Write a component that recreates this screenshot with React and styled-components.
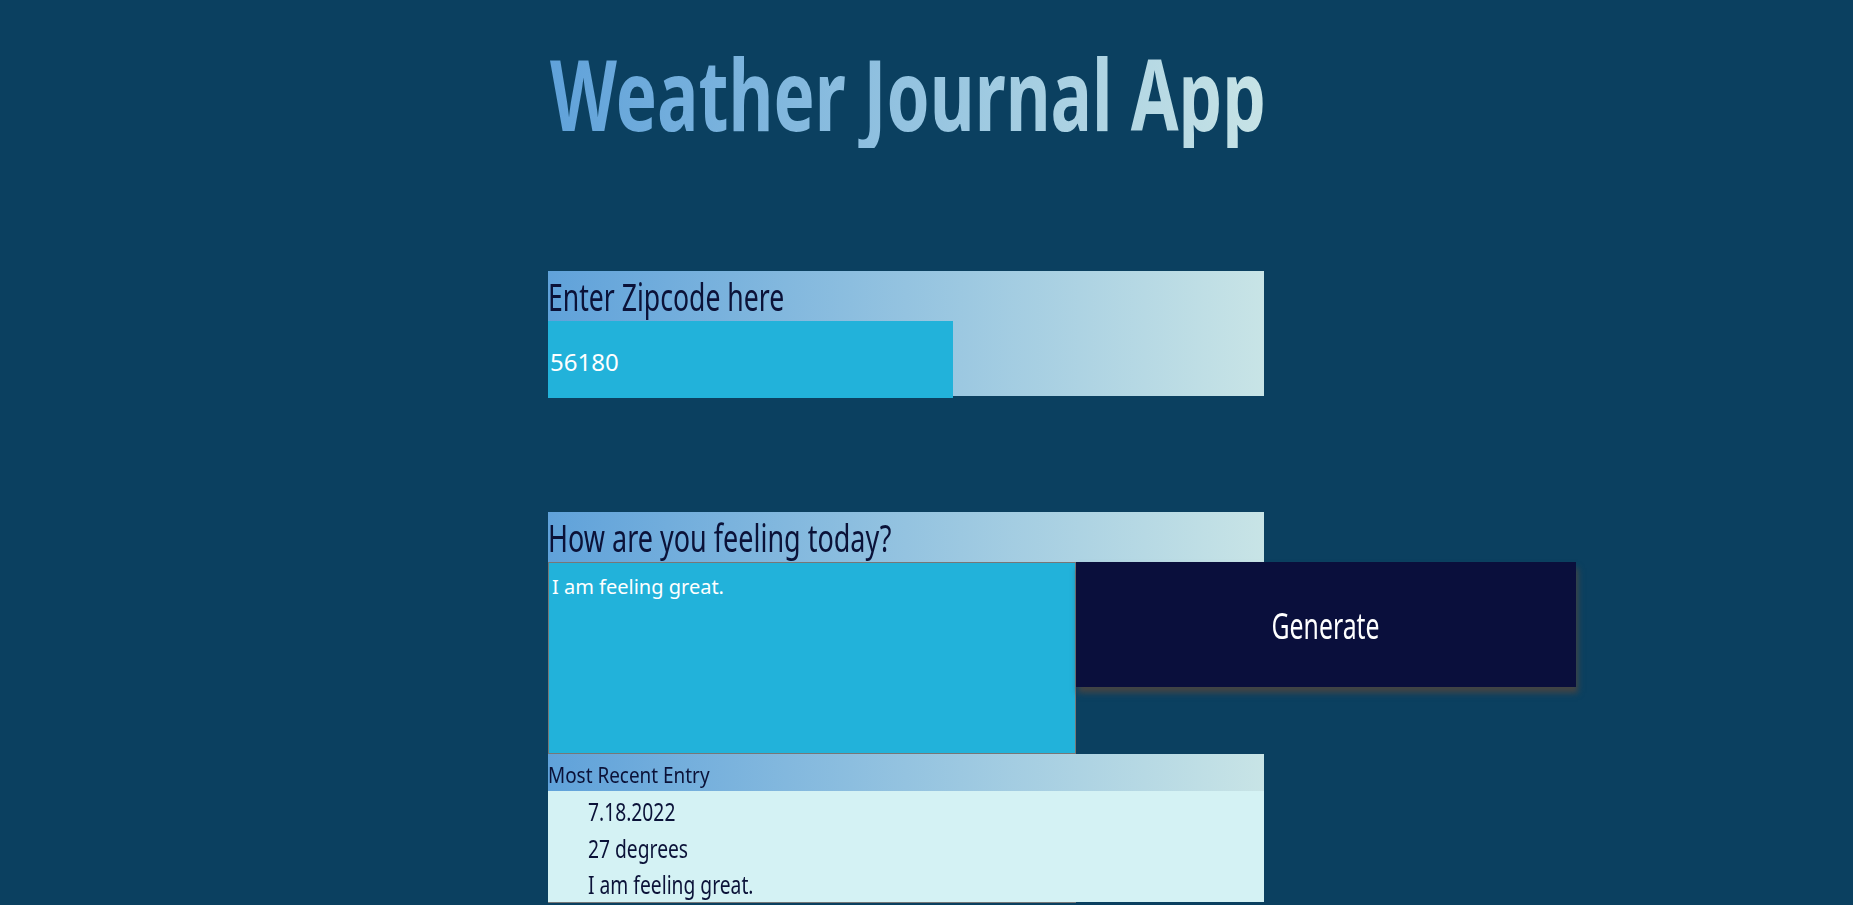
import React from "react";
import styled, { createGlobalStyle } from "styled-components";

const GlobalStyle = createGlobalStyle`
  body {
    margin: 0;
    background: #0b4060;
    font-family: "Noto Sans", "DejaVu Sans", sans-serif;
    color: #0b1238;
  }
`;

const fade = "linear-gradient(to right, #60a2da, #c8e4e6)";

function App() {
  return (
    <>
      <GlobalStyle />
      <Main>
        <Title>
          <TitleText>Weather Journal App</TitleText>
        </Title>

        <ZipHolder>
          <Label htmlFor="zip">
            <Narrow $k={0.7}>Enter Zipcode here</Narrow>
          </Label>
          <ZipInput id="zip" type="text" defaultValue="56180" />
        </ZipHolder>

        <FeelHolder>
          <Label htmlFor="feelings">
            <Narrow $k={0.71}>How are you feeling today?</Narrow>
          </Label>
          <Row>
            <Feelings id="feelings" defaultValue="I am feeling great." />
            <Generate type="button">
              <Narrow $k={0.67} $origin="center">Generate</Narrow>
            </Generate>
          </Row>
        </FeelHolder>

        <EntryHolder>
          <EntryTitle>
            <Narrow $k={0.86}>Most Recent Entry</Narrow>
          </EntryTitle>
          <EntryBody>
            <EntryLine>7.18.2022</EntryLine>
            <EntryLine>27 degrees</EntryLine>
            <EntryLine>I am feeling great.</EntryLine>
          </EntryBody>
        </EntryHolder>
        <Rule />
      </Main>
    </>
  );
}

const Main = styled.main`
  width: 716px;
  padding-left: 548px;
`;

// the reference face is a tall condensed one, so wide text gets squeezed
const Narrow = styled.span`
  display: inline-block;
  white-space: nowrap;
  transform: scaleX(${(p) => p.$k});
  transform-origin: ${(p) => p.$origin || "left"} center;
`;

const Title = styled.h1`
  margin: 38px 0 0;
  height: 110px;
  font-size: 98px;
  font-weight: 700;
  line-height: 110px;
`;

const TitleText = styled.span`
  display: inline-block;
  width: 1022px;
  padding-left: 3px;
  white-space: nowrap;
  transform: scaleX(0.706);
  transform-origin: left center;
  background: ${fade};
  -webkit-background-clip: text;
  background-clip: text;
  color: transparent;
`;

const ZipHolder = styled.div`
  margin-top: 123px;
  height: 125px;
  background: ${fade};
`;

const Label = styled.label`
  display: block;
  height: 50px;
  line-height: 50px;
  font-size: 38px;
  white-space: nowrap;
`;

const ZipInput = styled.input`
  display: block;
  box-sizing: border-box;
  width: 405px;
  height: 77px;
  margin: 0;
  padding: 3px 2px 0;
  border: none;
  outline: none;
  background: #22b2da;
  color: #fff;
  font-family: inherit;
  font-size: 24px;
`;

const FeelHolder = styled.div`
  margin-top: 116px;

  & > label {
    background: ${fade};
  }
`;

const Row = styled.div`
  display: flex;
  align-items: flex-start;
  width: 1028px;
`;

const Feelings = styled.textarea`
  flex: none;
  box-sizing: border-box;
  width: 528px;
  height: 192px;
  margin: 0;
  padding: 10px 3px 0;
  border: 1px solid #777;
  background: #22b2da;
  color: #fff;
  font-family: inherit;
  font-size: 20px;
  resize: none;
  outline: none;
`;

const Generate = styled.button`
  flex: none;
  width: 500px;
  height: 125px;
  padding: 0;
  border: none;
  background: #0a0f3c;
  color: #fff;
  font-family: inherit;
  font-size: 37px;
  box-shadow: 2px 6px 6px #444;
  cursor: pointer;
`;

const EntryHolder = styled.section``;

const EntryTitle = styled.div`
  height: 37px;
  line-height: 41px;
  font-size: 22px;
  background: ${fade};
`;

const EntryBody = styled.div`
  box-sizing: border-box;
  height: 111px;
  padding: 2px 0 0 40px;
  background: #d4f2f4;
`;

const EntryLine = styled.div`
  line-height: 36.5px;
  font-size: 25px;
  white-space: nowrap;
  transform: scaleX(0.77);
  transform-origin: left center;
`;

const Rule = styled.div`
  width: 528px;
  height: 1px;
  background: #777;
`;

export default App;
